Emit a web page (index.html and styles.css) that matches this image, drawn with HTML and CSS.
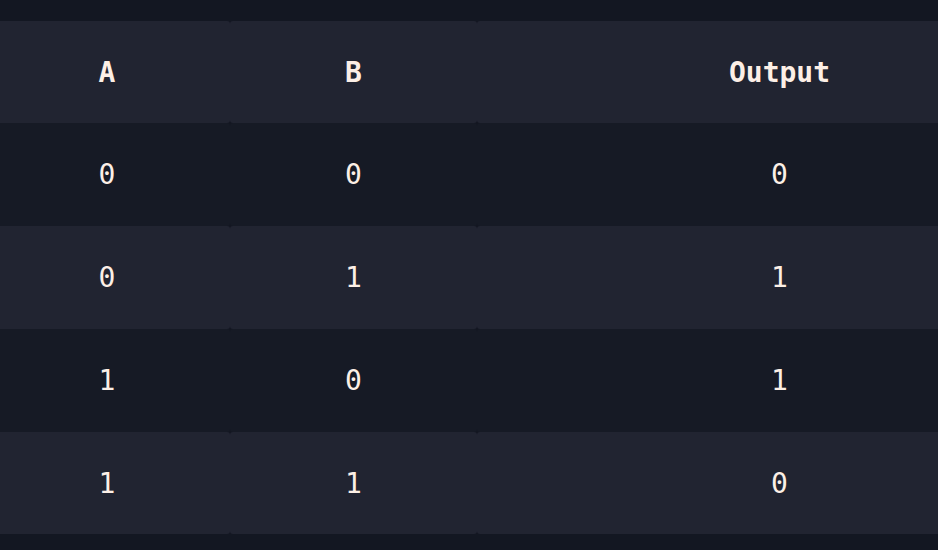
FILE: index.html
```html
<!DOCTYPE html>
<html>
<head>
<meta charset="utf-8">
<link rel="stylesheet" href="styles.css">
</head>
<body>
<div class="page">
  <table class="truth">
    <colgroup>
      <col class="c-a">
      <col class="c-b">
      <col class="c-out">
    </colgroup>
    <thead>
      <tr><th>A</th><th>B</th><th>Output</th></tr>
    </thead>
    <tbody>
      <tr><td>0</td><td>0</td><td>0</td></tr>
      <tr><td>0</td><td>1</td><td>1</td></tr>
      <tr><td>1</td><td>0</td><td>1</td></tr>
      <tr><td>1</td><td>1</td><td>0</td></tr>
    </tbody>
  </table>
</div>
</body>
</html>
```
FILE: styles.css
```css
html, body {
  margin: 0;
  padding: 0;
  background: #131722;
  overflow: hidden;
}
.page {
  padding-top: 21px;
  width: 938px;
  height: 550px;
  overflow: hidden;
}
.truth {
  margin-left: -16px;
  width: 1098px;
  border-collapse: separate;
  border-spacing: 0;
  table-layout: fixed;
  font-family: "DejaVu Sans Mono", "Liberation Mono", monospace;
  font-size: 28px;
  color: #fcefe6;
}
.c-a { width: 246px; }
.c-b { width: 247px; }
.c-out { width: 605px; }
.truth th, .truth td {
  height: 103px;
  padding: 0;
  text-align: center;
  vertical-align: middle;
  border-radius: 3px;
}
.truth th {
  height: 102px;
  font-weight: bold;
  background: #212431;
}
.truth tbody tr:nth-child(odd) td { background: #161a25; }
.truth tbody tr:nth-child(even) td { background: #212431; }
.truth tbody tr:last-child td { height: 102px; }
```
